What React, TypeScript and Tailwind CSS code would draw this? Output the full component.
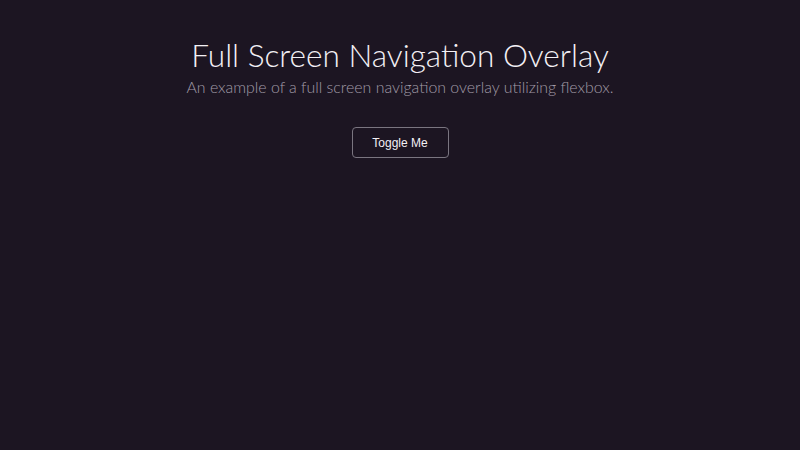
export default function App() {
  return (
    <div className="min-h-[450px] w-full bg-[#1c1522] flex flex-col items-center pt-[36px]">
      <h1 className="text-[31.6px] leading-[38px] font-light text-[#f3f0f5] font-['Lato',sans-serif]">
        Full Screen Navigation Overlay
      </h1>
      <p className="text-[15.9px] leading-[22px] font-light text-[#a09aa6] font-['Lato',sans-serif] mt-[2px]">
        An example of a full screen navigation overlay utilizing flexbox.
      </p>
      <button className="mt-[29px] w-[97px] h-[31px] rounded-[4px] border border-[#7a7580] text-[12px] text-[#f3f0f5] font-['Liberation_Sans',sans-serif]">
        Toggle Me
      </button>
    </div>
  );
}
